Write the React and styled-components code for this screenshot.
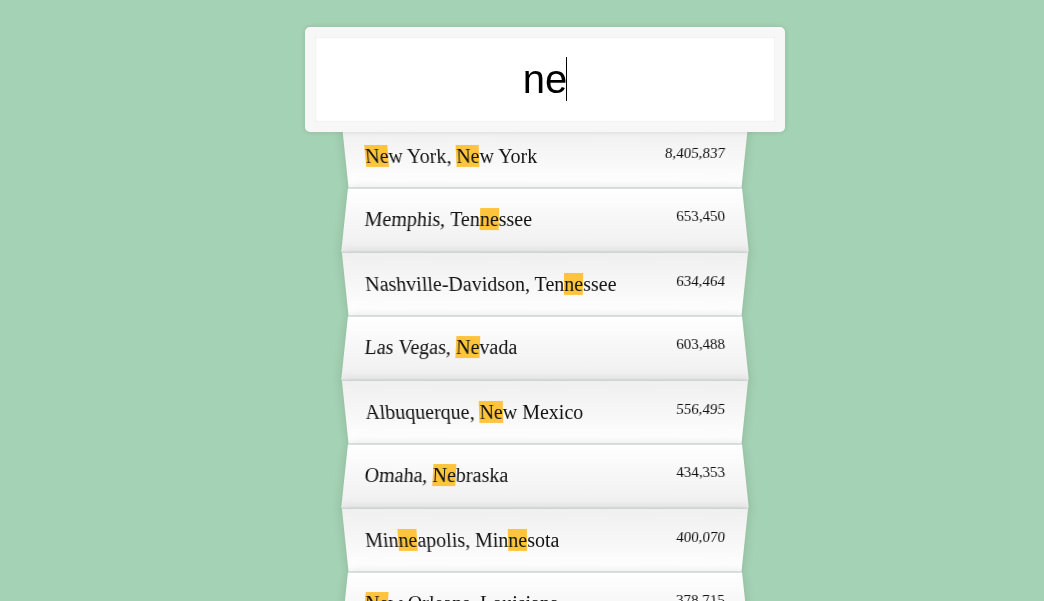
import React, { useState } from "react";
import styled, { createGlobalStyle, css } from "styled-components";

const GlobalStyle = createGlobalStyle`
  html {
    box-sizing: border-box;
    background: #a4d2b4;
    font-family: "Liberation Serif", "Times New Roman", serif;
    font-size: 20px;
    font-weight: 200;
  }
  *, *::before, *::after { box-sizing: inherit; }
  body { margin: 0; overflow: hidden; }
`;

const Page = styled.div`
  display: flex;
  justify-content: center;
  padding-left: 46px;
`;

const SearchForm = styled.form`
  width: 400px;
  margin: 17px 0 0;
`;

const InputWrap = styled.div`
  position: relative;
  top: 10px;
  left: -10%;
  z-index: 2;
  width: 120%;
`;

const SearchInput = styled.input`
  display: block;
  width: 100%;
  margin: 0;
  padding: 20px;
  height: 105px;
  text-align: center;
  outline: 0;
  border: 10px solid #f7f7f7;
  border-radius: 5px;
  font-family: "Liberation Sans", Arial, sans-serif;
  font-size: 40px;
  font-weight: 400;
  color: #000;
  caret-color: transparent;
  background: #fff;
  box-shadow: 0 0 5px rgba(0, 0, 0, 0.12), inset 0 0 2px rgba(0, 0, 0, 0.19);
`;

const Caret = styled.span`
  position: absolute;
  top: 30px;
  left: calc(50% + ${(p) => p.$offset}px);
  width: 1px;
  height: 44px;
  background: #000;
  pointer-events: none;
`;

const Suggestions = styled.ul`
  margin: 0;
  padding: 0;
  position: relative;
  list-style: none;
`;

const Item = styled.li`
  display: flex;
  justify-content: space-between;
  margin: 0;
  padding: 20px;
  line-height: 23px;
  color: #111;
  border-bottom: 1px solid #d8d8d8;
  box-shadow: 0 0 10px rgba(0, 0, 0, 0.14);
  ${(p) =>
    p.$even
      ? css`
          transform: perspective(100px) rotateX(3deg) translateY(2px) scale(1.001);
          background: linear-gradient(to bottom, #ffffff 0%, #efefef 100%);
        `
      : css`
          transform: perspective(100px) rotateX(-3deg) translateY(3px);
          background: linear-gradient(to top, #ffffff 0%, #efefef 100%);
        `}
`;

const Name = styled.span``;

const Population = styled.span`
  font-size: 15px;
  line-height: 17px;
`;

const Hl = styled.span`
  background: #fdc43c;
`;

const cities = [
  ["New York", "New York", "8,405,837"],
  ["Memphis", "Tennessee", "653,450"],
  ["Nashville-Davidson", "Tennessee", "634,464"],
  ["Las Vegas", "Nevada", "603,488"],
  ["Albuquerque", "New Mexico", "556,495"],
  ["Omaha", "Nebraska", "434,353"],
  ["Minneapolis", "Minnesota", "400,070"],
  ["New Orleans", "Louisiana", "378,715"],
  ["Saint Paul", "Minnesota", "294,873"],
];

function highlight(text, q) {
  const re = new RegExp(`(${q})`, "gi");
  return text.split(re).map((part, i) =>
    part.toLowerCase() === q.toLowerCase() ? <Hl key={i}>{part}</Hl> : part
  );
}

export default function App() {
  const [q, setQ] = useState("ne");
  const term = q || "ne";
  return (
    <>
      <GlobalStyle />
      <Page>
        <SearchForm onSubmit={(e) => e.preventDefault()}>
          <InputWrap>
            <SearchInput value={q} onChange={(e) => setQ(e.target.value)} />
            <Caret $offset={Math.round(q.length * 10.6)} />
          </InputWrap>
          <Suggestions>
            {cities.map(([city, state, pop], i) => (
              <Item key={city} $even={i % 2 === 1}>
                <Name>{highlight(`${city}, ${state}`, term)}</Name>
                <Population>{pop}</Population>
              </Item>
            ))}
          </Suggestions>
        </SearchForm>
      </Page>
    </>
  );
}
